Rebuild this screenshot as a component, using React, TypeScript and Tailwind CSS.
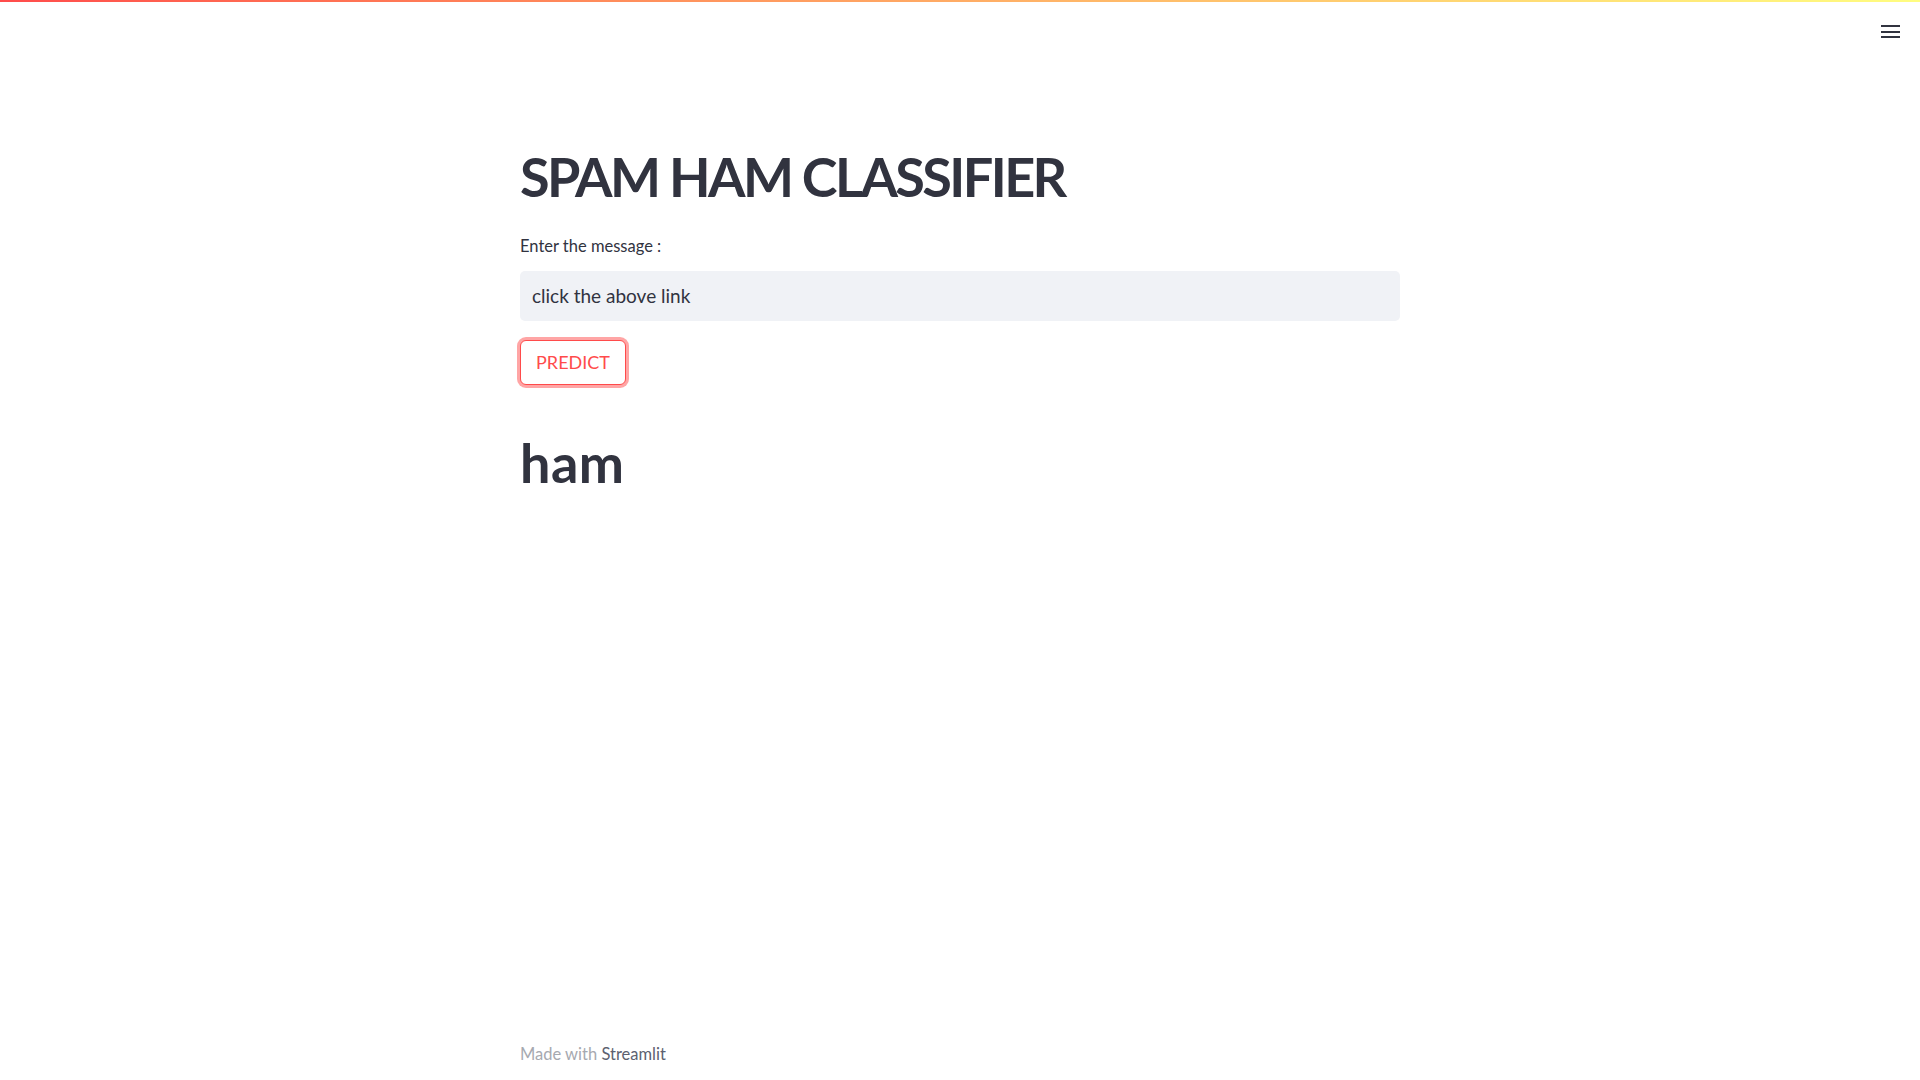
import React from "react";

export default function App() {
  return (
    <div
      className="min-h-screen w-full bg-white flex flex-col text-[#31333f]"
      style={{ fontFamily: '"Source Sans Pro", Lato, "Noto Sans", sans-serif' }}
    >
      <div className="h-[2px] w-full bg-linear-to-r from-[#ff4b4b] to-[#fffd80]" />
      <div className="flex justify-end pr-[20px] pt-[23px]">
        <div className="flex flex-col gap-[3.5px] w-[19px]">
          <div className="h-[2px] bg-[#31333f]" />
          <div className="h-[2px] bg-[#31333f]" />
          <div className="h-[2px] bg-[#31333f]" />
        </div>
      </div>
      <main className="w-[880px] mx-auto flex-1 flex flex-col pt-[103px]">
        <h1 className="text-[54px] font-bold leading-[72px] tracking-[-2.6px]">SPAM HAM CLASSIFIER</h1>
        <div className="mt-[21px] text-[16.5px] leading-[24px]">Enter the message :</div>
        <div className="mt-[13px] h-[50px] w-full bg-[#f0f2f6] rounded-[5px] flex items-center px-[12px] text-[19px]">
          click the above link
        </div>
        <div className="mt-[19px]">
          <button className="h-[45px] w-[106px] rounded-[6px] border border-[#ff4b4b] ring-[3px] ring-[#ff4b4b]/50 text-[#ff4b4b] text-[18px] bg-white flex items-center justify-center">
            PREDICT
          </button>
        </div>
        <h1 className="mt-[42px] text-[54px] font-bold leading-[72px] tracking-[0.5px]">ham</h1>
        <div className="flex-1" />
        <footer className="pb-[16px] text-[16.5px] leading-[20px]">
          <span className="text-[#a6a9b0]">Made with </span>
          <span className="text-[#5c6170]">Streamlit</span>
        </footer>
      </main>
    </div>
  );
}
